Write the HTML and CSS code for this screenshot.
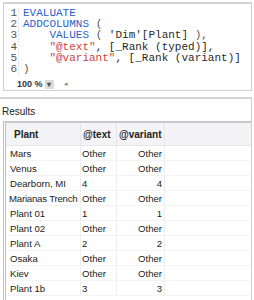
FILE: index.html
```html
<!DOCTYPE html>
<html lang="en">
<head>
  <meta charset="UTF-8">
  <link rel="stylesheet" href="styles.css">
  <title>Query</title>
</head>
<body>
  <div class="editor">
    <div class="code">
      <div class="line"><span class="num">1</span><span class="kw">EVALUATE</span></div>
      <div class="line"><span class="num">2</span><span class="kw">ADDCOLUMNS</span> <span class="pn">(</span></div>
      <div class="line"><span class="num">3</span>    <span class="kw">VALUES</span> <span class="pn">(</span> 'Dim'[Plant] <span class="pn">),</span></div>
      <div class="line"><span class="num">4</span>    <span class="str">"@text"</span>, [_Rank (typed)],</div>
      <div class="line"><span class="num">5</span>    <span class="str">"@variant"</span>, [_Rank (variant)]</div>
      <div class="line"><span class="num">6</span><span class="pn">)</span></div>
    </div>
    <div class="zoom">
      <span class="zoom-val">100 %</span>
      <span class="zoom-drop">&#9662;</span>
      <span class="zoom-left">&#9666;</span>
    </div>
  </div>

  <div class="results">
    <div class="results-title">Results</div>
    <div class="grid-wrap">
      <table class="grid">
        <thead>
          <tr><th class="c1">Plant</th><th class="c2">@text</th><th class="c3">@variant</th><th class="c4"></th></tr>
        </thead>
        <tbody>
          <tr><td>Mars</td><td>Other</td><td class="r">Other</td><td></td></tr>
          <tr><td>Venus</td><td>Other</td><td class="r">Other</td><td></td></tr>
          <tr><td>Dearborn, MI</td><td>4</td><td class="r">4</td><td></td></tr>
          <tr><td class="tight">Marianas Trench</td><td>Other</td><td class="r">Other</td><td></td></tr>
          <tr><td>Plant 01</td><td>1</td><td class="r">1</td><td></td></tr>
          <tr><td>Plant 02</td><td>Other</td><td class="r">Other</td><td></td></tr>
          <tr><td>Plant A</td><td>2</td><td class="r">2</td><td></td></tr>
          <tr><td>Osaka</td><td>Other</td><td class="r">Other</td><td></td></tr>
          <tr><td>Kiev</td><td>Other</td><td class="r">Other</td><td></td></tr>
          <tr><td>Plant 1b</td><td>3</td><td class="r">3</td><td></td></tr>
        </tbody>
      </table>
    </div>
  </div>
</body>
</html>
```

FILE: styles.css
```css
body {
  margin: 0;
  padding: 0;
  background-color: #fff;
  font-family: "Liberation Sans", Arial, sans-serif;
  width: 254px;
  height: 300px;
  overflow: hidden;
}

.editor {
  margin: 2px 2px 0 3px;
  height: 89px;
  box-sizing: border-box;
  border: 1px solid #cfcfcf;
  border-top: 2px solid #d4d4d4;
}

.code {
  padding: 4px 0 0 4px;
  font-family: "Liberation Mono", "Courier New", monospace;
  font-size: 11px;
  color: #2a2a2a;
}

.line {
  height: 11.2px;
  line-height: 11.2px;
  white-space: pre;
}

.num {
  display: inline-block;
  width: 9px;
  margin-right: 4px;
  padding-right: 1px;
  text-align: right;
  color: #555;
  border-right: 1px dotted #e0e0e0;
}

.kw {
  color: #2a5fc8;
}

.str {
  color: #c9453c;
}

.pn {
  color: #555;
}

.zoom {
  display: flex;
  align-items: center;
  margin: 4px 0 0 13px;
  font-size: 9px;
  font-weight: bold;
  color: #333;
}

.zoom-drop {
  margin-left: 2px;
  width: 9px;
  height: 9px;
  background-color: #dcdcdc;
  color: #555;
  font-size: 8px;
  line-height: 9px;
  text-align: center;
}

.zoom-left {
  margin-left: 10px;
  color: #888;
  font-size: 7px;
  font-weight: normal;
}

.results {
  margin: 6px 2px 0 0;
  border-top: 2px solid #d4d4d4;
  border-right: 1px solid #cfcfcf;
  height: 201px;
  overflow: hidden;
}

.results-title {
  padding: 7px 0 0 2px;
  font-size: 10px;
  color: #222;
  height: 15px;
}

.grid-wrap {
  margin-left: 3px;
  border-top: 2px solid #c8c8c8;
  border-left: 3px double #c0c0c0;
  height: 177px;
}

.grid {
  border-collapse: collapse;
  table-layout: fixed;
  width: 246px;
  font-size: 9.6px;
  color: #222;
}

.grid th {
  height: 22px;
  padding: 0 0 0 5px;
  text-align: left;
  font-weight: bold;
  font-size: 10px;
  background-color: #f4f4f6;
  border-right: 1px solid #e6e6e6;
  border-bottom: 1px solid #e6e6e6;
}

.grid td {
  height: 14px;
  padding: 0 0 0 1px;
  border-right: 1px solid #ededed;
  border-bottom: 1px solid #f3f3f3;
  white-space: nowrap;
}

.grid td:first-child {
  padding-left: 4px;
}

.grid td.tight {
  letter-spacing: -0.2px;
  padding-left: 3px;
}

.grid .c1 {
  width: 66px;
  padding-left: 8px;
}

.grid .c2 {
  width: 33px;
  padding-left: 2px;
}

.grid .c3 {
  width: 45px;
  padding-left: 2px;
}

.grid .c4 {
  border-right: none;
}

.grid td:last-child {
  border-right: none;
}

.grid td.r {
  text-align: right;
  padding-right: 2px;
}
```
